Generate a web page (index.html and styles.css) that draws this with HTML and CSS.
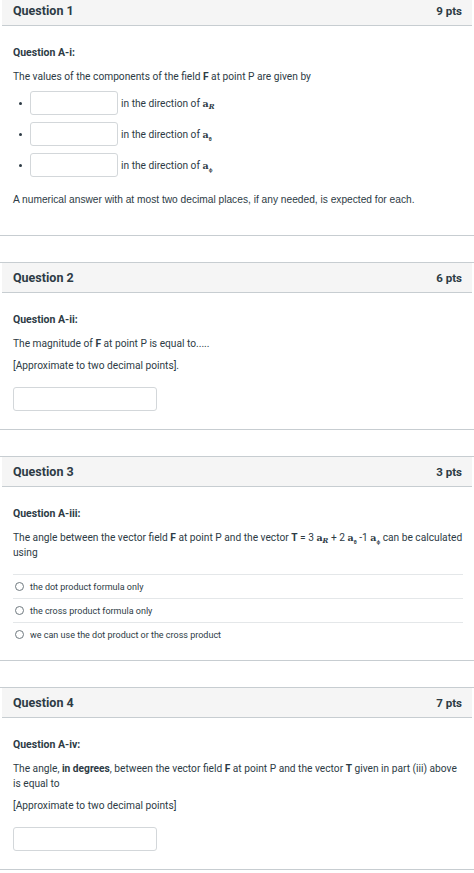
FILE: index.html
```html
<!DOCTYPE html>
<html>
<head>
<meta charset="utf-8">
<link rel="stylesheet" href="styles.css">
</head>
<body>
<div class="page">
  <section class="card first">
    <header class="qhead"><span class="qtitle">Question 1</span><span class="pts">9 pts</span></header>
    <div class="qbody q1">
      <p class="sub">Question A-i:</p>
      <p class="txt">The values of the components of the field <b>F</b> at point P are given by</p>
      <ul class="blanks">
        <li><span class="box"></span><span class="dir">in the direction of <span class="vec">a</span><sub class="vs it">R</sub></span></li>
        <li><span class="box"></span><span class="dir">in the direction of <span class="vec">a</span><sub class="vs tiny">θ</sub></span></li>
        <li><span class="box"></span><span class="dir">in the direction of <span class="vec">a</span><sub class="vs tiny">ϕ</sub></span></li>
      </ul>
      <p class="txt arial">A numerical answer with at most two decimal places, if any needed, is expected for each.</p>
    </div>
  </section>

  <section class="card">
    <header class="qhead"><span class="qtitle">Question 2</span><span class="pts">6 pts</span></header>
    <div class="qbody">
      <p class="sub">Question A-ii:</p>
      <p class="txt">The magnitude of <b>F</b> at point P is equal to.....</p>
      <p class="txt">[Approximate to two decimal points].</p>
      <div class="answer"></div>
    </div>
  </section>

  <section class="card">
    <header class="qhead"><span class="qtitle">Question 3</span><span class="pts">3 pts</span></header>
    <div class="qbody q3">
      <p class="sub">Question A-iii:</p>
      <p class="txt">The angle between the vector field <b>F</b> at point P and the vector <b>T</b> = 3 <span class="vec">a</span><sub class="vs it">R</sub> + 2 <span class="vec">a</span><sub class="vs tiny">θ</sub> -1 <span class="vec">a</span><sub class="vs tiny">ϕ</sub> can be calculated using</p>
      <div class="options">
        <div class="opt"><span class="radio"></span>the dot product formula only</div>
        <div class="opt"><span class="radio"></span>the cross product formula only</div>
        <div class="opt"><span class="radio"></span>we can use the dot product or the cross product</div>
      </div>
    </div>
  </section>

  <section class="card">
    <header class="qhead"><span class="qtitle">Question 4</span><span class="pts">7 pts</span></header>
    <div class="qbody">
      <p class="sub">Question A-iv:</p>
      <p class="txt">The angle, <b>in degrees</b>, between the vector field <b>F</b> at point P and the vector <b>T</b> given in part (iii) above is equal to</p>
      <p class="txt">[Approximate to two decimal points]</p>
      <div class="answer"></div>
    </div>
  </section>
</div>
</body>
</html>
```

FILE: styles.css
```css
* { box-sizing: border-box; }
html, body { margin: 0; padding: 0; background: #fff; }
body {
  font-family: Roboto, "Liberation Sans", Arial, sans-serif;
  color: #2d3b45;
  width: 474px;
  overflow: hidden;
}
.page { display: flex; flex-direction: column; gap: 26px; }
.card {
  border-top: 1px solid #c7cdd1;
  border-bottom: 1px solid #c7cdd1;
}
.card.first { margin-top: -5px; }
.qhead {
  height: 30px;
  background: #f5f5f5;
  border-bottom: 1px solid #c7cdd1;
  margin: 0 2px;
  display: flex;
  align-items: center;
  justify-content: space-between;
  padding: 0 10px 0 11px;
}
.qtitle { font-size: 12.5px; font-weight: 700; }
.pts { font-size: 11.5px; font-weight: 700; }
.qbody { padding: 20px 8px 18px 13px; }
.q1 { padding-bottom: 21px; }
p { margin: 0; }
.sub { font-size: 10.5px; font-weight: 700; line-height: 13px; margin-bottom: 10px; }
.txt { font-size: 10.2px; line-height: 15px; margin-bottom: 7px; }
.txt b { font-weight: 700; }
.arial { font-family: "Liberation Sans", Arial, sans-serif; }
.blanks { list-style: none; margin: 7px 0 15px 0; padding: 0; display: flex; flex-direction: column; gap: 7px; }
.blanks li { display: flex; align-items: center; position: relative; padding-left: 17px; }
.blanks li::before {
  content: "";
  position: absolute; left: 6px; top: 11px;
  width: 3px; height: 3px; border-radius: 50%; background: #2d3b45;
}
.box {
  width: 88px; height: 24px;
  border: 1px solid #d3d7da; border-radius: 3px;
  background: #fff;
}
.dir { font-size: 10.2px; margin-left: 3px; }
.vec { font-family: "DejaVu Serif", "Liberation Serif", serif; font-weight: 700; font-size: 9.5px; }
.vs { font-size: 7px; font-weight: 700; line-height: 0; vertical-align: -0.35em; }
.vs.it { font-style: italic; font-family: "DejaVu Serif", serif; }
.vs.tiny { font-size: 5px; vertical-align: -0.6em; }
.answer {
  width: 144px; height: 24px;
  border: 1px solid #d3d7da; border-radius: 3px;
  margin-top: 14px;
}
.q3 { padding-bottom: 14px; padding-right: 11px; }
.q3 .txt { margin-right: -4px; }
.options { margin-top: 14px; }
.opt {
  height: 24px;
  border-top: 1px solid #e4e7e9;
  display: flex; align-items: center;
  font-size: 9px;
  padding-left: 2px;
}
.radio {
  width: 9px; height: 9px; border: 1px solid #707a80; border-radius: 50%;
  margin-right: 6px; background: #fff;
}
```
